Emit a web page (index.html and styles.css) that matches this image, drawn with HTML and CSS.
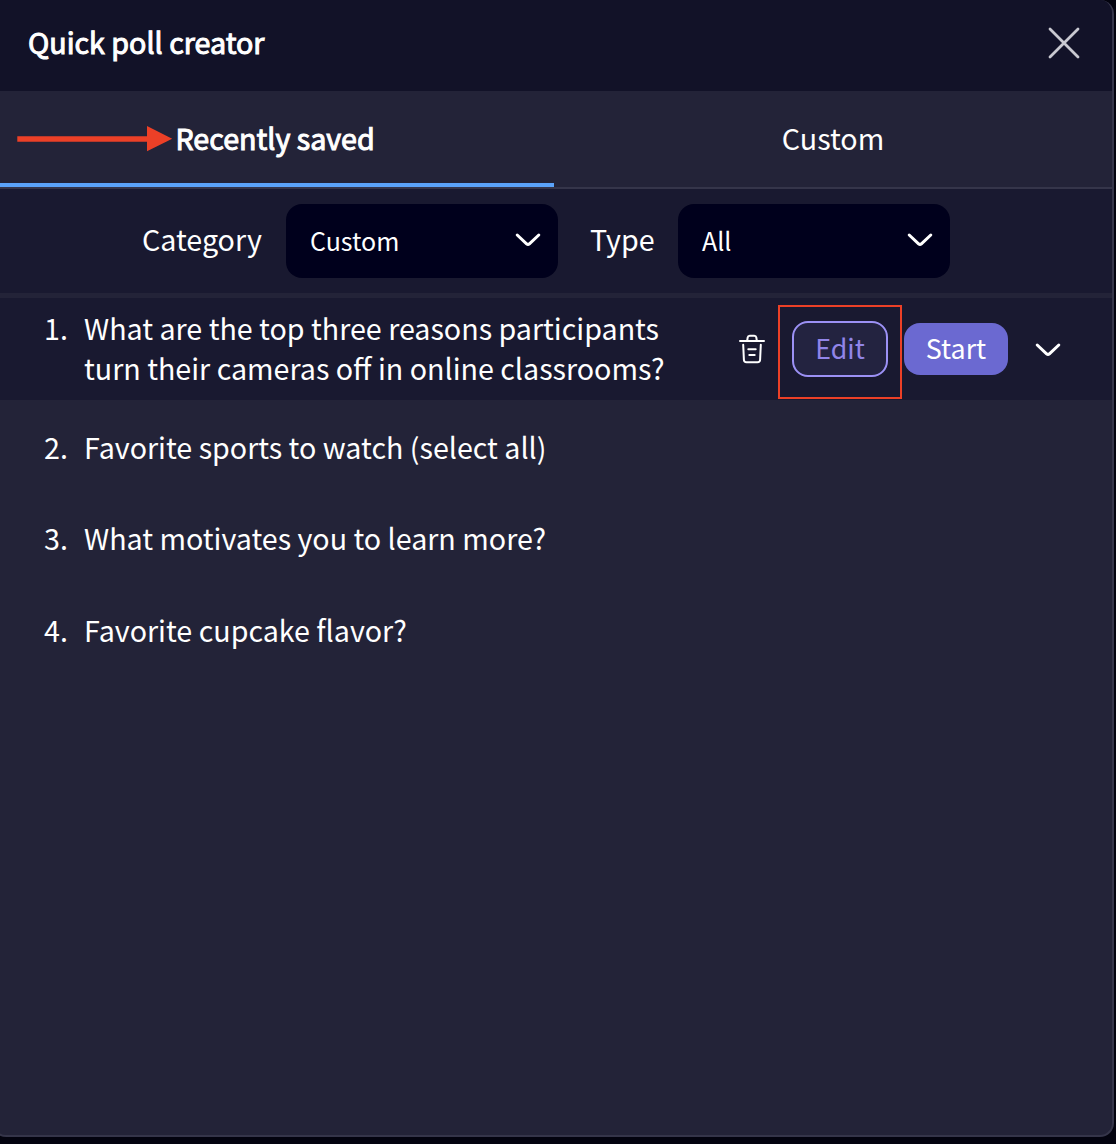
FILE: index.html
```
<!DOCTYPE html>
<html lang="en">
<head>
<meta charset="utf-8">
<title>Quick poll creator</title>
<link rel="stylesheet" href="styles.css">
</head>
<body>
<main class="panel">
  <header class="header">
    <h1 class="title"><span>Quick poll creator</span></h1>
    <svg class="close" width="36" height="36" viewBox="0 0 36 36"><path d="M4 4 32 32M32 4 4 32"/></svg>
  </header>
  <nav class="tabs">
    <div class="tab tab-active">
      <svg class="arrow" width="156" height="26" viewBox="0 0 156 26"><path d="M0.3 10.3H130V0L155.2 12.7 130 25.3V15.7H0.3Z"/></svg>
      <span class="tab-name">Recently saved</span>
    </div>
    <div class="tab"><span class="tab-custom">Custom</span></div>
  </nav>
  <section class="filters">
    <span class="label label-category">Category</span>
    <div class="select"><span>Custom</span><svg class="chevron" width="26" height="16" viewBox="0 0 26 16"><path d="M2.2 3 11.6 11.8Q13 13 14.4 11.8L23.8 3"/></svg></div>
    <span class="label label-type">Type</span>
    <div class="select"><span>All</span><svg class="chevron" width="26" height="16" viewBox="0 0 26 16"><path d="M2.2 3 11.6 11.8Q13 13 14.4 11.8L23.8 3"/></svg></div>
  </section>
  <section class="polls">
    <article class="poll poll-active">
      <span class="number">1.</span>
      <p class="question">What are the top three reasons participants<br>turn their cameras off in online classrooms?</p>
      <div class="actions">
        <svg class="trash" width="26" height="30" viewBox="0 0 26 30"><path d="M1 7H25M8.2 6.5 8.7 3.4Q9 1.7 10.7 1.7H15.3Q17 1.7 17.3 3.4L17.8 6.5M4.2 10.8 4.9 25.7Q5 28.2 7.5 28.2H18.5Q21 28.2 21.1 25.7L21.8 10.8M9.3 15.3H16.7M10.3 21H15.7"/></svg>
        <div class="callout"><button class="button edit">Edit</button></div>
        <button class="button start">Start</button>
        <svg class="chevron" width="26" height="16" viewBox="0 0 26 16"><path d="M2.2 3 11.6 11.8Q13 13 14.4 11.8L23.8 3"/></svg>
      </div>
    </article>
    <article class="poll"><span class="number">2.</span><p class="question">Favorite sports to watch (select all)</p></article>
    <article class="poll"><span class="number">3.</span><p class="question">What motivates you to learn more?</p></article>
    <article class="poll"><span class="number">4.</span><p class="question">Favorite cupcake flavor?</p></article>
  </section>
</main>
</body>
</html>
```
FILE: styles.css
```
* { box-sizing: border-box; }
body {
  margin: 0;
  height: 1144px;
  overflow: hidden;
  background: #03030f;
  color: #fff;
  font: 28.65px/40px "Noto Sans CJK SC", "Noto Sans", sans-serif;
}
svg { display: block; fill: none; stroke-linecap: round; stroke-linejoin: round; flex: none; }
.panel {
  width: 1122px;
  height: 1137px;
  margin-left: -8px;
  padding-left: 6px;
  border: 2px solid #35354a;
  border-top: 0;
  border-radius: 0 14px 14px 14px;
  background: #232338;
  overflow: hidden;
}
.header {
  display: flex;
  align-items: center;
  justify-content: space-between;
  height: 91px;
  padding: 0 30px 5px 28px;
  background: #121228;
}
.title { margin: 0; padding-bottom: 2px; font-size: 28.65px; font-weight: 400; -webkit-text-stroke: 1px #fff; }
.close { stroke: #c9c9d1; stroke-width: 2.8; }
.tabs { display: flex; height: 98px; border-bottom: 2px solid #35354a; }
.tab {
  display: flex;
  align-items: center;
  justify-content: center;
  width: 558px;
  padding-bottom: 2px;
}
.tab-active {
  width: 554px;
  padding: 0 0 0 17px;
  justify-content: flex-start;
  border-bottom: 4px solid #5ba3fa;
}
.tab-name { margin: 2px 0 0 2.5px; -webkit-text-stroke: 1px #fff; }
.arrow { margin-top: 3px; fill: #ec4027; }
.filters {
  display: flex;
  align-items: center;
  height: 104px;
  padding-left: 142px;
  background: #191930;
}
.label { padding-bottom: 4px; }
.label-category { width: 144px; }
.label-type { width: 88px; margin-left: 32px; }
.select {
  display: flex;
  align-items: center;
  justify-content: space-between;
  width: 272px;
  height: 74px;
  padding: 0 17px 2px 24px;
  border-radius: 16px;
  background: #00001c;
  font-size: 25px;
}
.chevron { stroke: #fff; stroke-width: 3; }
.polls { padding-top: 5px; }
.poll { display: flex; height: 91.4px; padding: 27px 0 0 44px; }
.poll-active { height: 102px; padding-top: 10px; background: #191930; }
.number { width: 40px; }
.question { width: 640px; margin: 0; white-space: nowrap; }
.actions { display: flex; align-items: center; height: 88px; margin: -3px 0 0 15px; }
.trash { stroke: #fff; stroke-width: 2; }
.callout { padding: 14px 12px 20px; margin: 0 0 -6px 13px; border: 2px solid #ec4027; }
.button {
  display: block;
  border: 0;
  border-radius: 16px;
  padding: 0 0 2px;
  color: #fff;
  font: inherit;
  font-size: 26.8px;
}
.edit { width: 96px; height: 56px; border: 2px solid #9c91f5; background: #232340; color: #9185e8; }
.start { width: 104px; height: 52px; margin: 0 27px 0 2px; background: #6b69d1; }
.actions .chevron { margin-top: 2px; }
```
